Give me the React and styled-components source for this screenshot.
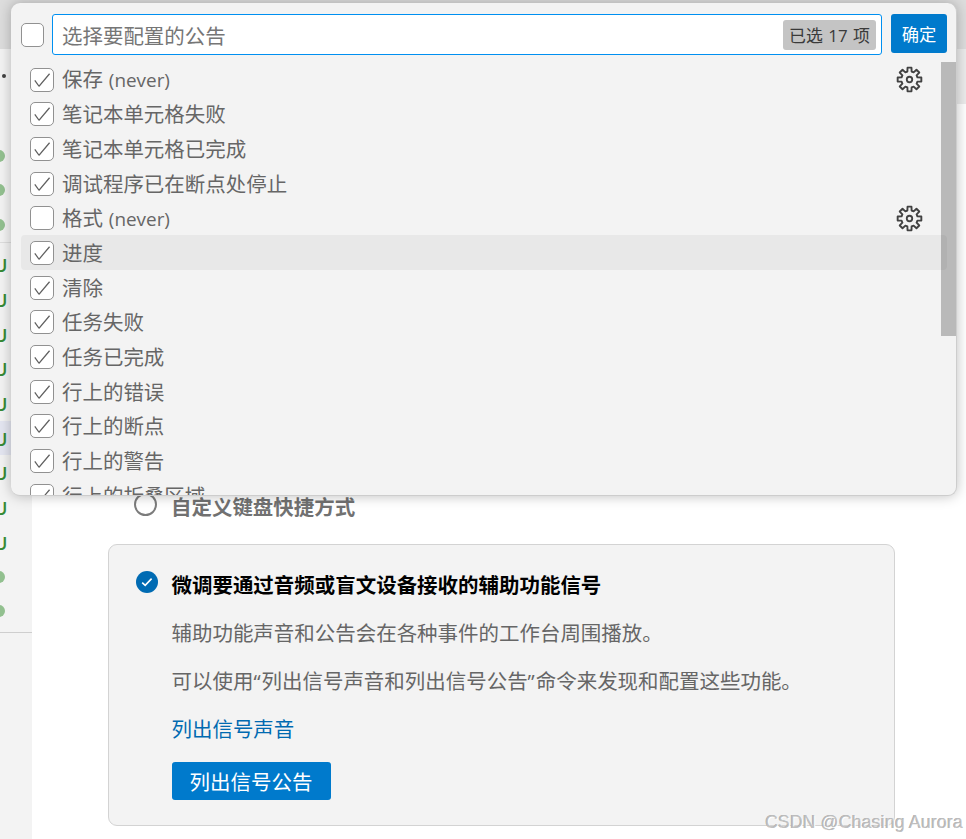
import styled, { createGlobalStyle } from "styled-components";
import { VscCheck } from "react-icons/vsc";

const GlobalStyle = createGlobalStyle`
  * {
    box-sizing: border-box;
  }
  body {
    margin: 0;
    overflow: hidden;
    background: white;
    font-family: "Open Sans", "Noto Sans CJK SC", sans-serif;
    font-size: 20.48px;
    color: #666666;
  }
`;

const Window = styled.div`
  position: relative;
  display: flex;
  flex-direction: column;
  width: 966px;
  height: 839px;
  overflow: hidden;
`;

const TitleBar = styled.header`
  flex: none;
  height: 49px;
  background: #dddddd;
`;

const Workbench = styled.div`
  display: flex;
  flex: 1;
  min-height: 0;
`;

const Sidebar = styled.aside`
  display: flex;
  flex-direction: column;
  width: 32px;
  background: #f3f3f3;
  overflow: hidden;
`;

const More = styled.div`
  display: flex;
  justify-content: flex-end;
  align-items: center;
  gap: 3px;
  height: 54px;
  margin-bottom: 35.5px;
  padding-right: 26px;
`;

const MoreDot = styled.i`
  flex: none;
  width: 4px;
  height: 4px;
  border-radius: 50%;
  background: #424242;
`;

const FileGroup = styled.div`
  padding: ${(props) => props.$pad || 0};
  border-bottom: 1px solid ${(props) => props.$line};
`;

const FileRow = styled.div`
  display: flex;
  justify-content: flex-end;
  align-items: center;
  height: 34.66px;
  padding-right: ${(props) => (props.$dot ? 27 : 24.5)}px;
  background: ${(props) => (props.$active ? "#e4e6f1" : "transparent")};
  color: #388a34;
  font-size: 18.5px;
  font-weight: 600;
`;

const FileDot = styled.i`
  flex: none;
  width: 12px;
  height: 12px;
  border-radius: 50%;
  background: #92c08f;
`;

const Editor = styled.main`
  display: flex;
  flex-direction: column;
  flex: 1;
`;

const Tabs = styled.div`
  flex: none;
  height: 55px;
  background: #ececec;
`;

const Steps = styled.div`
  display: flex;
  flex-direction: column;
  padding: 387px 71px 0 76px;
`;

const Step = styled.div`
  display: flex;
  gap: 14px;
  height: 53px;
  padding-left: 26px;
`;

const Circle = styled.span`
  flex: none;
  width: 23px;
  height: 23px;
  margin-top: 2px;
  border: 2px solid #7c7c7c;
  border-radius: 50%;
`;

const StepTitle = styled.h3`
  margin: 0;
  font-size: 20.48px;
  line-height: 32px;
  font-weight: 700;
  white-space: nowrap;
  color: ${(props) => props.color};
`;

const Card = styled.section`
  display: flex;
  gap: 14px;
  height: 282px;
  padding: 24px 26px 24px 26.5px;
  background: #f3f3f3;
  border: 1px solid #d3d3d3;
  border-radius: 9px;
`;

const Done = styled.span`
  display: flex;
  flex: none;
  justify-content: center;
  align-items: center;
  width: 22px;
  height: 22px;
  margin-top: 2px;
  border-radius: 50%;
  background: #006bb3;
`;

const CardBody = styled.div`
  display: flex;
  flex-direction: column;
  align-items: flex-start;
`;

const Text = styled.p`
  margin: 16px 0 0;
  line-height: 32px;
  white-space: nowrap;
`;

const Quote = styled.span`
  letter-spacing: 1px;
`;

const TextLink = styled.a`
  margin-top: 16px;
  line-height: 32px;
  color: #006ab1;
`;

const Button = styled.button`
  display: flex;
  justify-content: center;
  align-items: center;
  flex: none;
  width: ${(props) => props.$width}px;
  height: ${(props) => props.$height}px;
  padding: 0;
  border: none;
  border-radius: 3px;
  background: #007acc;
  color: white;
  font-family: inherit;
  font-size: ${(props) => props.$size}px;
`;

const CardAction = styled.div`
  margin-top: 17px;
`;

const QuickPick = styled.div`
  position: absolute;
  top: 3px;
  left: 11px;
  display: flex;
  flex-direction: column;
  width: 946px;
  height: 493px;
  overflow: hidden;
  border-right: 1px solid #cdcdcd;
  border-bottom: 1px solid #cdcdcd;
  border-radius: 9px;
  background: #f3f3f3;
  box-shadow: 0 0 13px rgba(0, 0, 0, 0.26);
`;

const PickHeader = styled.div`
  display: flex;
  flex: none;
  align-items: flex-start;
  height: 59px;
  padding: 11px 9px 0 10px;
`;

const Box = styled.span`
  display: flex;
  flex: none;
  justify-content: center;
  align-items: center;
  width: ${(props) => props.$width || 24}px;
  height: 24px;
  margin-top: ${(props) => props.$top || 0}px;
  border: 1px solid #919191;
  border-radius: 5px;
  background: white;
  color: #616161;
  font-size: 20px;
`;

const Filter = styled.div`
  display: flex;
  justify-content: space-between;
  align-items: center;
  width: 830px;
  height: 41px;
  margin: 0 9px 0 8px;
  padding: 0 5px 0 9px;
  border: 1px solid #0090f1;
  border-radius: 3px;
  background: white;
  color: #767676;
`;

const Count = styled.span`
  width: 93px;
  height: 30px;
  border-radius: 3px;
  background: #c4c4c4;
  color: #3a3a3a;
  font-size: 16.9px;
  line-height: 31px;
  word-spacing: 1px;
  text-align: center;
  white-space: nowrap;
`;

const ListArea = styled.div`
  display: flex;
  flex: 1;
  min-height: 0;
  overflow: hidden;
`;

const List = styled.div`
  flex: 1;
  padding-left: 10px;
`;

const Row = styled.div`
  display: flex;
  align-items: center;
  gap: 8px;
  height: 34.66px;
  padding: 1px 18px 0 9px;
  border-radius: 4px 0 0 4px;
  background: ${(props) => (props.$active ? "#e8e8e8" : "transparent")};
`;

const Label = styled.span`
  flex: 1;
  line-height: 34px;
  white-space: nowrap;
`;

const Never = styled.span`
  margin-left: 1px;
  font-size: 18.9px;
`;

const ScrollTrack = styled.div`
  width: 15px;
`;

const ScrollThumb = styled.div`
  height: 274px;
  padding-top: 173px;
  background: #b9b9b9;
`;

const RowEnd = styled.div`
  width: 6px;
  height: 35px;
  border-radius: 0 4px 4px 0;
  background: #b1b1b1;
`;

const Watermark = styled.div`
  position: absolute;
  right: 3px;
  bottom: 5px;
  color: rgba(190, 190, 190, 0.95);
  font-family: "Liberation Sans", sans-serif;
  font-size: 17.6px;
  line-height: 24px;
  letter-spacing: 0.2px;
  text-shadow: 1px 1px 0 white, -0.5px -0.5px 0 #a6a6a6;
  white-space: nowrap;
`;

// eight teeth, four corners each
const toothCorners = [
  [-15, 8.2],
  [-9.5, 12],
  [9.5, 12],
  [15, 8.2],
];

const gearPoints = Array.from({ length: 8 }, (_, i) =>
  toothCorners.map(([deg, r]) => {
    const a = ((deg + i * 45) * Math.PI) / 180;
    return `${(Math.sin(a) * r).toFixed(2)},${(-Math.cos(a) * r).toFixed(2)}`;
  })
)
  .flat()
  .join(" ");

const Gear = () => (
  <svg
    width="27"
    height="27"
    viewBox="-13.5 -13.5 27 27"
    fill="none"
    stroke="#424242"
    strokeWidth="1.9"
    strokeLinejoin="round"
  >
    <polygon points={gearPoints} />
    <circle r="2.7" />
  </svg>
);

const signals = [
  { label: "保存", never: true, checked: true },
  { label: "笔记本单元格失败", checked: true },
  { label: "笔记本单元格已完成", checked: true },
  { label: "调试程序已在断点处停止", checked: true },
  { label: "格式", never: true, checked: false },
  { label: "进度", checked: true, active: true },
  { label: "清除", checked: true },
  { label: "任务失败", checked: true },
  { label: "任务已完成", checked: true },
  { label: "行上的错误", checked: true },
  { label: "行上的断点", checked: true },
  { label: "行上的警告", checked: true },
  { label: "行上的折叠区域", checked: true },
];

const files = ["U", "U", "U", "U", "U", "U", "U", "U", "U", "", ""];

export default function App() {
  return (
    <Window>
      <GlobalStyle />
      <TitleBar />
      <Workbench>
        <Sidebar>
          <More>
            <MoreDot />
            <MoreDot />
          </More>
          <FileGroup $line="#dedede">
            {[0, 1, 2].map((i) => (
              <FileRow key={i} $dot>
                <FileDot />
              </FileRow>
            ))}
          </FileGroup>
          <FileGroup $line="#cecece" $pad="4px 0 3px">
            {files.map((mark, i) => (
              <FileRow key={i} $active={i === 5} $dot={!mark}>
                {mark || <FileDot />}
              </FileRow>
            ))}
          </FileGroup>
        </Sidebar>
        <Editor>
          <Tabs />
          <Steps>
            <Step>
              <Circle />
              <StepTitle color="#717171">自定义键盘快捷方式</StepTitle>
            </Step>
            <Card>
              <Done>
                <svg width="12" height="12" viewBox="0 0 12 12">
                  <path
                    d="M1.2 6.6 L4.2 9.4 L10.6 2.6"
                    fill="none"
                    stroke="white"
                    strokeWidth="1.6"
                  />
                </svg>
              </Done>
              <CardBody>
                <StepTitle color="#000000">
                  微调要通过音频或盲文设备接收的辅助功能信号
                </StepTitle>
                <Text>辅助功能声音和公告会在各种事件的工作台周围播放。</Text>
                <Text>
                  可以使用<Quote>“</Quote>列出信号声音和列出信号公告
                  <Quote>”</Quote>命令来发现和配置这些功能。
                </Text>
                <TextLink>列出信号声音</TextLink>
                <CardAction>
                  <Button $width={159} $height={38} $size={20.48}>
                    列出信号公告
                  </Button>
                </CardAction>
              </CardBody>
            </Card>
          </Steps>
        </Editor>
      </Workbench>

      <QuickPick>
        <PickHeader>
          <Box $top={9} $width={23} />
          <Filter>
            选择要配置的公告
            <Count>已选 17 项</Count>
          </Filter>
          <Button $width={56} $height={39} $size={17.3}>
            确定
          </Button>
        </PickHeader>
        <ListArea>
          <List>
            {signals.map((item) => (
              <Row key={item.label} $active={item.active}>
                <Box>{item.checked && <VscCheck />}</Box>
                <Label>
                  {item.label}
                  {item.never && <Never> (never)</Never>}
                </Label>
                {item.never && <Gear />}
              </Row>
            ))}
          </List>
          <ScrollTrack>
            <ScrollThumb>
              <RowEnd />
            </ScrollThumb>
          </ScrollTrack>
        </ListArea>
      </QuickPick>

      <Watermark>CSDN @Chasing Aurora</Watermark>
    </Window>
  );
}
